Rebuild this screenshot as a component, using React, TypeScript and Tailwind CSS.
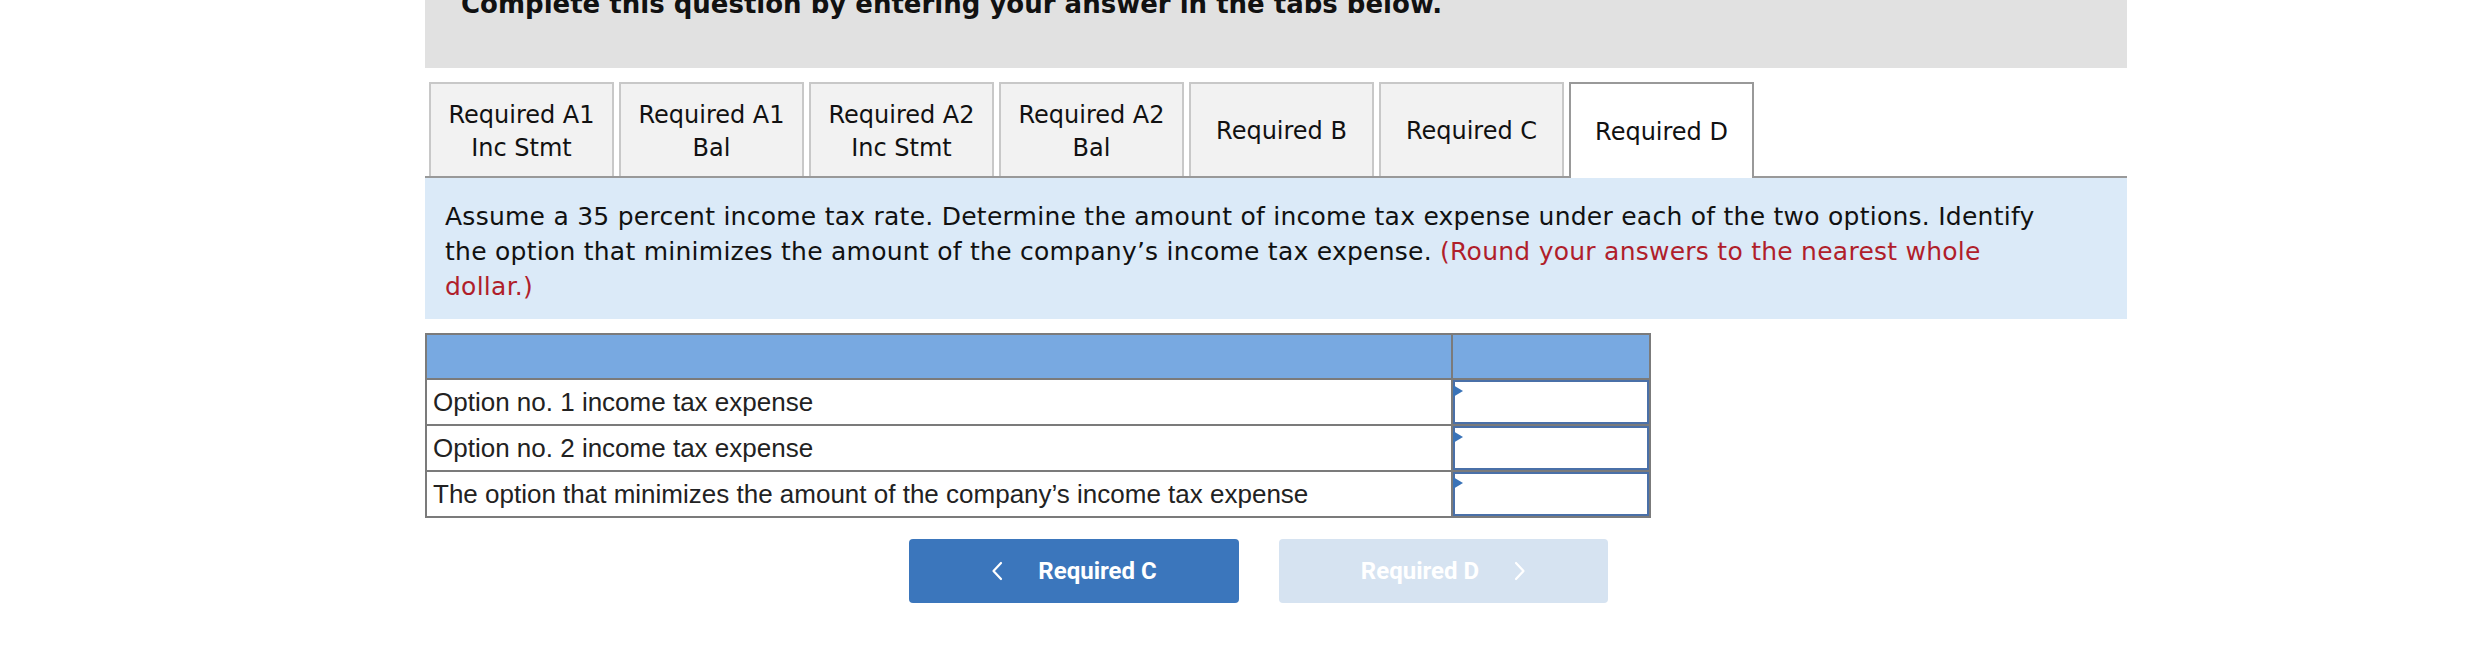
import React from 'react';

const tabs = [
  ['Required A1', 'Inc Stmt'],
  ['Required A1', 'Bal'],
  ['Required A2', 'Inc Stmt'],
  ['Required A2', 'Bal'],
  ['Required B'],
  ['Required C'],
  ['Required D'],
];

const rows = [
  'Option no. 1 income tax expense',
  'Option no. 2 income tax expense',
  'The option that minimizes the amount of the company’s income tax expense',
];

function Chevron({ dir }: { dir: 'left' | 'right' }) {
  return (
    <svg width="12" height="20" viewBox="0 0 12 20" fill="none">
      <path
        d={dir === 'left' ? 'M10 2 L2.5 10 L10 18' : 'M2 2 L9.5 10 L2 18'}
        stroke="white"
        strokeWidth="2.2"
        strokeLinecap="round"
        strokeLinejoin="round"
      />
    </svg>
  );
}

function AnswerRow({ label }: { label: string }) {
  return (
    <div className="flex h-[46px] border-t-2 border-[#7b7b7b]">
      <div className="flex flex-1 items-center border-r-2 border-[#7b7b7b] pl-[6px] text-[26px] text-[#222]">
        {label}
      </div>
      <div className="w-[196px]">
        <div className="relative h-full w-full border-2 border-[#4a70a8] bg-white">
          <div className="absolute left-[-2px] top-[3px] h-0 w-0 border-y-[6px] border-l-[10px] border-y-transparent border-l-[#3a73b8]" />
        </div>
      </div>
    </div>
  );
}

export default function App() {
  return (
    <div className="min-h-[651px] bg-white font-['DejaVu_Sans',sans-serif]">
      <div className="ml-[425px] w-[1702px]">
        {/* instructions header */}
        <div className="flex h-[68px] flex-col overflow-hidden bg-[#e1e1e1] pl-[36px]">
          <p className="-mt-[9px] text-[26px] font-bold leading-[26px] text-[#111]">
            Complete this question by entering your answer in the tabs below.
          </p>
        </div>

        {/* tabs */}
        <div className="mt-[14px] flex gap-[5px] border-b-2 border-[#999] pl-[4px]">
          {tabs.map((t, i) => {
            const active = i === tabs.length - 1;
            return (
              <div
                key={i}
                className={
                  active
                    ? '-mb-[2px] flex h-[96px] w-[185px] flex-col items-center justify-center border-2 border-b-0 border-[#999] bg-white pt-[2px] text-[24px] leading-[33px] text-[#111]'
                    : 'flex h-[94px] w-[185px] flex-col items-center justify-center border-2 border-b-0 border-[#c8c8c8] bg-[#f2f2f2] pt-[3px] text-[24px] leading-[33px] text-[#111]'
                }
              >
                {t.map((line) => (
                  <span key={line}>{line}</span>
                ))}
              </div>
            );
          })}
        </div>

        {/* question text */}
        <div className="h-[141px] bg-[#dbeaf8] px-[20px] pt-[21px] text-[25px] leading-[35px] tracking-[0.25px] text-[#111]">
          Assume a 35 percent income tax rate. Determine the amount of income tax expense under each of the
          two options. Identify
          <br />
          the option that minimizes the amount of the company’s income tax expense.{' '}
          <span className="text-[#b01e2b]">
            (Round your answers to the nearest whole
            <br />
            dollar.)
          </span>
        </div>

        {/* answer table */}
        <div className="mt-[14px] w-[1226px] border-2 border-[#7b7b7b] font-['Liberation_Sans',Arial,sans-serif]">
          <div className="flex h-[43px] bg-[#78a9e1]">
            <div className="flex-1 border-r-2 border-[#7b7b7b]" />
            <div className="w-[196px]" />
          </div>
          {rows.map((r) => (
            <AnswerRow key={r} label={r} />
          ))}
        </div>

        {/* navigation */}
        <div className="mt-[21px] flex gap-[40px] pl-[484px] font-['Roboto',sans-serif]">
          <button className="flex h-[64px] w-[330px] items-center justify-center gap-[35px] rounded-[4px] bg-[#3b76bc] text-[24px] font-bold text-white">
            <Chevron dir="left" />
            <span>Required C</span>
          </button>
          <button className="flex h-[64px] w-[329px] items-center justify-center gap-[35px] rounded-[4px] bg-[#d6e3f1] text-[24px] font-bold text-white">
            <span>Required D</span>
            <Chevron dir="right" />
          </button>
        </div>
      </div>
    </div>
  );
}
